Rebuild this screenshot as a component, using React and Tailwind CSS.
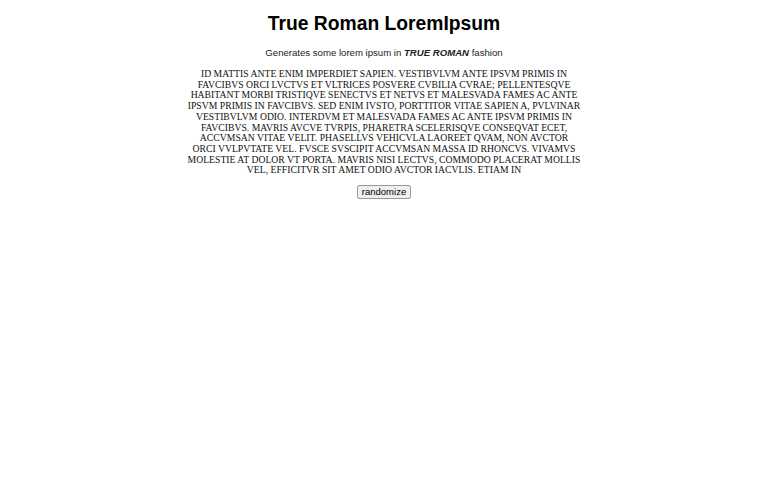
import React, { useState } from 'react';

const LINES = [
  'ID MATTIS ANTE ENIM IMPERDIET SAPIEN. VESTIBVLVM ANTE IPSVM PRIMIS IN',
  'FAVCIBVS ORCI LVCTVS ET VLTRICES POSVERE CVBILIA CVRAE; PELLENTESQVE',
  'HABITANT MORBI TRISTIQVE SENECTVS ET NETVS ET MALESVADA FAMES AC ANTE',
  'IPSVM PRIMIS IN FAVCIBVS. SED ENIM IVSTO, PORTTITOR VITAE SAPIEN A, PVLVINAR',
  'VESTIBVLVM ODIO. INTERDVM ET MALESVADA FAMES AC ANTE IPSVM PRIMIS IN',
  'FAVCIBVS. MAVRIS AVCVE TVRPIS, PHARETRA SCELERISQVE CONSEQVAT ECET,',
  'ACCVMSAN VITAE VELIT. PHASELLVS VEHICVLA LAOREET QVAM, NON AVCTOR',
  'ORCI VVLPVTATE VEL. FVSCE SVSCIPIT ACCVMSAN MASSA ID RHONCVS. VIVAMVS',
  'MOLESTIE AT DOLOR VT PORTA. MAVRIS NISI LECTVS, COMMODO PLACERAT MOLLIS',
  'VEL, EFFICITVR SIT AMET ODIO AVCTOR IACVLIS. ETIAM IN',
];

export default function App() {
  const [lines, setLines] = useState(LINES);

  const randomize = () => {
    setLines([...lines].sort(() => Math.random() - 0.5));
  };

  return (
    <div className="min-h-[480px] bg-white text-center font-['Liberation_Sans',Arial,sans-serif] text-black">
      <h1 className="pt-[12px] text-[19.3px] font-bold leading-[23px]">True Roman LoremIpsum</h1>
      <p className="mt-[12px] text-[9.6px] leading-[12px] text-[#222]">
        Generates some lorem ipsum in <b><i>TRUE ROMAN</i></b> fashion
      </p>
      <div className="mx-auto mt-[10px] w-[420px] font-['Liberation_Serif','Times_New_Roman',serif] text-[9.7px] leading-[10.7px] text-[#111]">
        {lines.map((l, i) => (
          <div key={i} className="whitespace-nowrap">{l}</div>
        ))}
      </div>
      <button
        onClick={randomize}
        className="mt-[9px] rounded-[2px] border border-[#999] bg-[#efefef] px-[4px] text-[9.5px] leading-[12px] text-black"
      >
        randomize
      </button>
    </div>
  );
}
